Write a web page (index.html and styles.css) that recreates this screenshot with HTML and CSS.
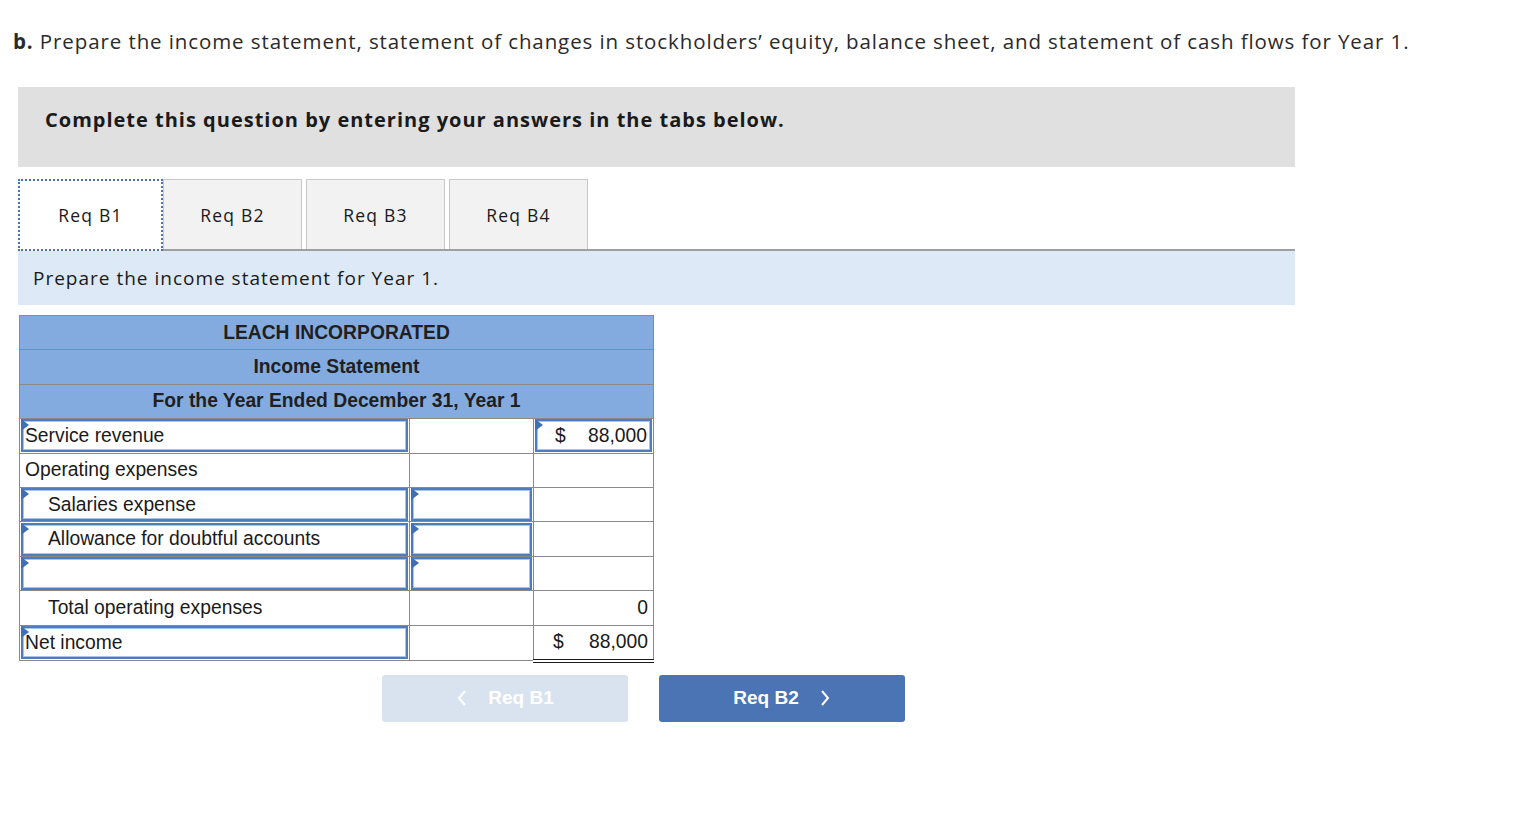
FILE: index.html
```html
<!DOCTYPE html>
<html>
<head>
<meta charset="utf-8">
<link rel="stylesheet" href="styles.css">
</head>
<body>
<div class="page">
  <p class="prompt"><b>b.</b> Prepare the income statement, statement of changes in stockholders’ equity, balance sheet, and statement of cash flows for Year 1.</p>
  <div class="notice">Complete this question by entering your answers in the tabs below.</div>
  <div class="tabs">
    <div class="tab active">Req B1</div>
    <div class="tab">Req B2</div>
    <div class="tab">Req B3</div>
    <div class="tab">Req B4</div>
  </div>
  <div class="instr">Prepare the income statement for Year 1.</div>
  <table class="stmt">
    <colgroup><col class="c1"><col class="c2"><col class="c3"></colgroup>
    <tr class="hd"><td colspan="3">LEACH INCORPORATED</td></tr>
    <tr class="hd"><td colspan="3">Income Statement</td></tr>
    <tr class="hd"><td colspan="3">For the Year Ended December 31, Year 1</td></tr>
    <tr>
      <td><div class="inp">Service revenue</div></td>
      <td></td>
      <td><div class="inp amt"><span>$</span><span>88,000</span></div></td>
    </tr>
    <tr>
      <td><div class="txt">Operating expenses</div></td>
      <td></td>
      <td></td>
    </tr>
    <tr>
      <td><div class="inp ind">Salaries expense</div></td>
      <td><div class="inp"></div></td>
      <td></td>
    </tr>
    <tr>
      <td><div class="inp ind">Allowance for doubtful accounts</div></td>
      <td><div class="inp"></div></td>
      <td></td>
    </tr>
    <tr>
      <td><div class="inp ind"></div></td>
      <td><div class="inp"></div></td>
      <td></td>
    </tr>
    <tr>
      <td><div class="txt ind">Total operating expenses</div></td>
      <td></td>
      <td><div class="txt num">0</div></td>
    </tr>
    <tr>
      <td><div class="inp">Net income</div></td>
      <td></td>
      <td class="dbl"><div class="txt amt"><span>$</span><span>88,000</span></div></td>
    </tr>
  </table>
  <div class="nav">
    <div class="btn prev"><svg width="12" height="18" viewBox="0 0 12 18"><path d="M9 2 L3 9 L9 16" fill="none" stroke="#fff" stroke-width="2"/></svg><span>Req B1</span></div>
    <div class="btn next"><span>Req B2</span><svg width="12" height="18" viewBox="0 0 12 18"><path d="M3 2 L9 9 L3 16" fill="none" stroke="#fff" stroke-width="2"/></svg></div>
  </div>
</div>
</body>
</html>
```
FILE: styles.css
```css
html, body { margin: 0; padding: 0; background: #fff; }
body { font-family: "Open Sans", "Noto Sans", sans-serif; color: #222; }
.page { padding: 0 0 0 18px; width: 1277px; }
.prompt {
  margin: 0 0 0 -5px;
  padding-top: 28px;
  height: 87px;
  box-sizing: border-box;
  font-size: 20.5px;
  line-height: 26px;
  color: #2a2a2a;
  white-space: nowrap;
  letter-spacing: 0.9px;
}
.prompt b { font-weight: 700; }
.notice {
  background: #e0e0e0;
  height: 80px;
  box-sizing: border-box;
  padding: 20px 0 0 27px;
  font-weight: 700;
  font-size: 20px;
  line-height: 26px;
  letter-spacing: 1px;
  color: #1a1a1a;
}
.tabs {
  display: flex;
  gap: 4px;
  margin-top: 12px;
  border-bottom: 2px solid #a0a0a0;
  height: 70px;
}
.tab {
  width: 139px;
  height: 70px;
  box-sizing: border-box;
  background: #f2f2f2;
  border: 1px solid #c8c8c8;
  border-bottom: none;
  display: flex;
  align-items: center;
  justify-content: center;
  font-size: 17.5px;
  letter-spacing: 1.2px;
  color: #1a1a1a;
}
.tab.active {
  width: 145px;
  height: 72px;
  margin-right: -4px;
  background: #fff;
  border: 2px dotted #4a73b7;
  position: relative;
  z-index: 1;
}
.instr {
  background: #dde9f7;
  height: 54px;
  box-sizing: border-box;
  padding: 14px 0 0 15px;
  font-size: 19px;
  line-height: 26px;
  letter-spacing: 1px;
  color: #1a1a1a;
}
.stmt {
  margin: 10px 0 0 1px;
  border-collapse: collapse;
  border: 1px solid #8a8a8a;
  font-family: "Liberation Sans", Arial, sans-serif;
  font-size: 19.3px;
  color: #1a1a1a;
}
.stmt col.c1 { width: 390px; }
.stmt col.c2 { width: 124px; }
.stmt col.c3 { width: 120px; }
.stmt td {
  border: 1px solid #8a8a8a;
  padding: 0;
  height: 33.4px;
  vertical-align: middle;
}
.stmt tr.hd td {
  background: #84abe0;
  text-align: center;
  font-weight: 700;
  color: #1f1f1f;
  border-left: none;
  border-right: none;
}
.inp {
  position: relative;
  height: 33px;
  box-sizing: border-box;
  border: 2px solid #4d7cc0;
  box-shadow: inset 0 0 0 1px #a9c3ea;
  margin: 0 1px;
  display: flex;
  align-items: center;
  padding-left: 2px;
}
.inp::before {
  content: "";
  position: absolute;
  left: -2px;
  top: -2px;
  width: 0;
  height: 0;
  border-top: 6px solid transparent;
  border-bottom: 6px solid transparent;
  border-left: 8px solid #3f6fb5;
  z-index: 2;
}
.txt {
  height: 33px;
  display: flex;
  align-items: center;
  padding-left: 5px;
}
.ind { padding-left: 25px; }
.txt.ind { padding-left: 28px; }
.amt {
  justify-content: space-between;
  padding: 0 3px 0 18px;
}
.txt.amt { padding: 0 5px 0 19px; }
.num { justify-content: flex-end; padding-right: 5px; }
td.dbl { border-bottom: 4px double #1a1a1a; }
.nav {
  display: flex;
  gap: 31px;
  margin: 12px 0 0 364px;
}
.btn {
  width: 246px;
  height: 47px;
  border-radius: 3px;
  display: flex;
  align-items: center;
  justify-content: center;
  gap: 20px;
  font-family: "Liberation Sans", Arial, sans-serif;
  font-weight: 700;
  font-size: 19px;
  color: #fff;
}
.btn.prev { background: #d9e3f0; }
.btn.next { background: #4a74b4; }
```
